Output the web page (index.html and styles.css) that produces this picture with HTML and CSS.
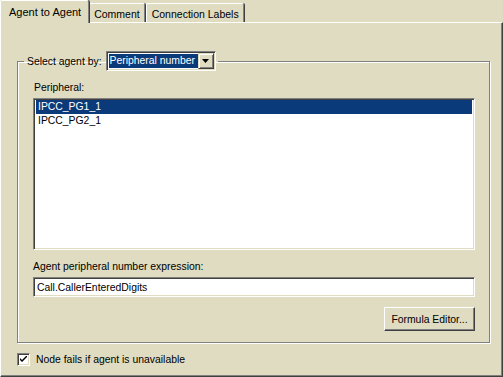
FILE: index.html
```html
<!DOCTYPE html>
<html>
<head>
<meta charset="utf-8">
<link rel="stylesheet" href="styles.css">
</head>
<body>
<div class="window">
  <div class="tabs">
    <div class="tab active">Agent to Agent</div>
    <div class="tab">Comment</div>
    <div class="tab">Connection Labels</div>
  </div>
  <div class="panel">
    <fieldset class="group">
      <legend class="legend">
        <span class="legend-text">Select agent by:</span>
        <span class="combo">
          <span class="combo-value">Peripheral number</span>
          <span class="combo-btn">
            <svg width="7" height="4" viewBox="0 0 7 4"><path d="M0 0h7L3.5 4z" fill="#000"/></svg>
          </span>
        </span>
      </legend>
      <div class="label label-peripheral">Peripheral:</div>
      <div class="listbox">
        <div class="item selected">IPCC_PG1_1</div>
        <div class="item">IPCC_PG2_1</div>
      </div>
      <div class="label label-expr">Agent peripheral number expression:</div>
      <div class="textbox">Call.CallerEnteredDigits</div>
      <div class="btn-row">
        <div class="button">Formula Editor...</div>
      </div>
    </fieldset>
    <div class="check-row">
      <span class="checkbox">
        <svg width="7" height="7" viewBox="0 0 7 7"><path d="M0 2 L0 4 L2 6 L7 1 L7 -1 L2 4 Z" fill="#000"/></svg>
      </span>
      <span class="check-label">Node fails if agent is unavailable</span>
    </div>
  </div>
</div>
</body>
</html>
```

FILE: styles.css
```css
* { box-sizing: border-box; }
html, body { margin: 0; padding: 0; }
body {
  width: 503px;
  height: 377px;
  background: #dfdcc1;
  font-family: "Liberation Sans", Arial, sans-serif;
  font-size: 10.4px;
  color: #000;
  overflow: hidden;
}
.window {
  width: 503px;
  height: 377px;
  display: flex;
  flex-direction: column;
}
.tabs {
  height: 22px;
  display: flex;
  align-items: flex-end;
  padding-left: 2px;
  position: relative;
  z-index: 1;
}
.tab {
  height: 19px;
  padding: 4px 4px 0 5px;
  border-top: 1px solid #fff;
  border-left: 1px solid #fff;
  border-right: 1px solid #808080;
  box-shadow: 1px 0 0 #404040;
  border-radius: 2px 2px 0 0;
  white-space: nowrap;
  margin-right: 1px;
  font-size: 10.5px;
}
.tab.active {
  height: 23px;
  margin-bottom: -1px;
  padding: 5px 7px 0 8px;
  background: #dfdcc1;
  margin-right: -1px;
  margin-left: -2px;
  position: relative;
  z-index: 2;
  font-size: 11px;
}
.panel {
  width: 503px;
  height: 355px;
  border-top: 1px solid #fff;
  border-left: 1px solid #fff;
  border-right: 1px solid #404040;
  border-bottom: 1px solid #404040;
  box-shadow: inset -1px -1px 0 #808080;
  padding: 28px 13px 0 16px;
  display: flex;
  flex-direction: column;
}
.group {
  margin: 0;
  width: 473px;
  height: 292px;
  border: 1px solid #808080;
  box-shadow: inset 1px 1px 0 #fff, 1px 1px 0 #fff;
  padding: 0 14px 0 15px;
  display: flex;
  flex-direction: column;
}
.legend {
  padding: 0 2px 0 3px;
  margin-left: -9px;
  display: flex;
  align-items: center;
  height: 20px;
}
.legend-text {
  margin-right: 4px;
}
.combo {
  width: 110px;
  height: 20px;
  display: flex;
  align-items: stretch;
  border: 1px solid;
  border-color: #808080 #fff #fff #808080;
  box-shadow: inset 1px 1px 0 #404040, inset -1px -1px 0 #dfdcc1;
  padding: 2px;
  background: #fff;
}
.combo-value {
  flex: 1;
  background: #0b3a7a;
  color: #fff;
  line-height: 14px;
  padding-left: 1px;
  white-space: nowrap;
  overflow: hidden;
}
.combo-btn {
  width: 16px;
  margin: -1px -1px -1px 0;
  background: #dfdcc1;
  border: 1px solid;
  border-color: #dfdcc1 #404040 #404040 #dfdcc1;
  box-shadow: inset 1px 1px 0 #fff, inset -1px -1px 0 #808080;
  display: flex;
  align-items: center;
  justify-content: center;
}
.label {
  line-height: 13px;
  white-space: nowrap;
}
.label-peripheral {
  margin-top: 10px;
  margin-left: 1px;
}
.listbox {
  margin-top: 4px;
  height: 152px;
  background: #fff;
  border: 1px solid;
  border-color: #808080 #fff #fff #808080;
  box-shadow: inset 1px 1px 0 #404040, inset -1px -1px 0 #dfdcc1;
  padding: 1px 2px 2px 2px;
}
.item {
  height: 14px;
  line-height: 14px;
  padding-left: 2px;
}
.item.selected {
  background: #0b3a7a;
  color: #fff;
}
.label-expr {
  margin-top: 10px;
}
.textbox {
  margin-top: 4px;
  height: 20px;
  background: #fff;
  border: 1px solid;
  border-color: #808080 #fff #fff #808080;
  box-shadow: inset 1px 1px 0 #404040, inset -1px -1px 0 #dfdcc1;
  padding: 3px 3px 0 3px;
  line-height: 13px;
}
.btn-row {
  margin-top: 10px;
  display: flex;
  justify-content: flex-end;
}
.button {
  width: 91px;
  height: 24px;
  border: 1px solid;
  border-color: #fff #404040 #404040 #fff;
  box-shadow: inset -1px -1px 0 #808080;
  display: flex;
  align-items: center;
  justify-content: center;
  white-space: nowrap;
}
.check-row {
  margin-top: 9px;
  display: flex;
  align-items: center;
  height: 14px;
}
.checkbox {
  width: 13px;
  height: 13px;
  background: #fff;
  border: 1px solid;
  border-color: #808080 #fff #fff #808080;
  box-shadow: inset 1px 1px 0 #404040, inset -1px -1px 0 #dfdcc1;
  display: flex;
  align-items: center;
  justify-content: center;
  margin-right: 6px;
}
.check-label {
  white-space: nowrap;
}
```
